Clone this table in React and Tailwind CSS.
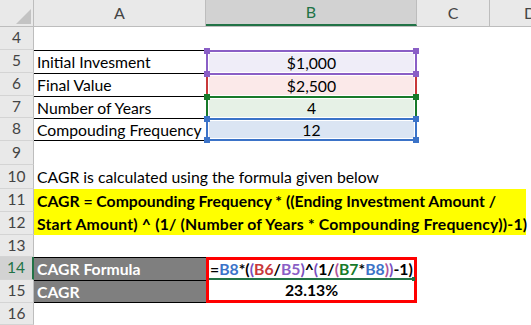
import React from "react";

const F = { fontFamily: "Lato, 'Liberation Sans', sans-serif" };

function RH({ n, sel }) {
  return (
    <div
      className={
        "w-[34px] shrink-0 h-full flex items-center justify-center text-[15.5px] border-b border-[#d4d4d4] " +
        (sel
          ? "bg-[#d2d2d2] text-[#217346] border-r-2 border-r-[#217346]"
          : "bg-[#e9e9e9] text-[#444] border-r border-r-[#bdbdbd]")
      }
    >
      {n}
    </div>
  );
}

function Row({ h, children }) {
  return <div className={"flex " + h}>{children}</div>;
}

function Handle({ pos, color }) {
  return <div className={"absolute w-[6px] h-[6px] z-10 " + pos + " " + color} />;
}

export default function App() {
  const P = "text-[#7a4fc0]";
  return (
    <div className="w-[531px] h-[325px] overflow-hidden bg-white text-black" style={F}>
      {/* header */}
      <div className="flex h-[27px] border-b border-[#bdbdbd] text-[16px] text-[#444]">
        <div className="w-[34px] shrink-0 bg-[#e9e9e9] border-r border-[#bdbdbd] relative">
          <svg className="absolute left-0 top-0" width="34" height="26" viewBox="0 0 34 26">
            <polygon points="16,24 31,9 31,24" fill="#c3c3c3" />
          </svg>
        </div>
        <div className="w-[172px] shrink-0 bg-[#e9e9e9] border-r border-[#bdbdbd] flex items-center justify-center">A</div>
        <div className="w-[211px] shrink-0 bg-[#d2d2d2] border-r border-[#bdbdbd] border-b-2 border-b-[#217346] text-[#217346] flex items-center justify-center">B</div>
        <div className="w-[73px] shrink-0 bg-[#e9e9e9] border-r border-[#bdbdbd] flex items-center justify-center">C</div>
        <div className="flex-1 bg-[#e9e9e9] flex items-center pl-[34px]">D</div>
      </div>

      <div className="text-[15.75px] leading-none">
        <Row h="h-[23px]">
          <RH n="4" />
        </Row>

        <Row h="h-[23px]">
          <RH n="5" />
          <div className="w-[172px] shrink-0 border-t border-black flex items-center pl-[3px]">Initial Invesment</div>
          <div className="w-[211px] shrink-0 relative border-t-2 border-x-2 border-[#8a5fc6] p-px">
            <Handle pos="-left-[4px] -top-[4px]" color="bg-[#8a5fc6]" />
            <Handle pos="-right-[4px] -top-[4px]" color="bg-[#8a5fc6]" />
            <div className="h-full bg-[#efedf8] flex items-center justify-center">$1,000</div>
          </div>
        </Row>

        <Row h="h-[23px]">
          <RH n="6" />
          <div className="w-[172px] shrink-0 border-t border-black flex items-center pl-[3px]">Final Value</div>
          <div className="w-[211px] shrink-0 relative border-t-2 border-t-[#8a5fc6] border-x-2 border-x-[#c8383a] p-px">
            <Handle pos="-left-[4px] -top-[4px]" color="bg-[#8a5fc6]" />
            <Handle pos="-right-[4px] -top-[4px]" color="bg-[#8a5fc6]" />
            <div className="h-full bg-[#fbe9e9] flex items-center justify-center">$2,500</div>
          </div>
        </Row>

        <Row h="h-[22px]">
          <RH n="7" />
          <div className="w-[172px] shrink-0 border-t border-black flex items-center pl-[3px]">Number of Years</div>
          <div className="w-[211px] shrink-0 relative border-t-2 border-x-2 border-[#177a2a] p-px">
            <Handle pos="-left-[4px] -top-[4px]" color="bg-[#177a2a]" />
            <Handle pos="-right-[4px] -top-[4px]" color="bg-[#177a2a]" />
            <div className="h-full bg-[#e6f1e6] flex items-center justify-center">4</div>
          </div>
        </Row>

        <Row h="h-[23px]">
          <RH n="8" />
          <div className="w-[172px] shrink-0 border-y border-black flex items-center pl-[3px] whitespace-nowrap">Compouding Frequency</div>
          <div className="w-[211px] shrink-0 relative border-2 border-[#3b73c8] p-px">
            <Handle pos="-left-[4px] -top-[4px]" color="bg-[#3b73c8]" />
            <Handle pos="-right-[4px] -top-[4px]" color="bg-[#3b73c8]" />
            <Handle pos="-left-[4px] -bottom-[4px]" color="bg-[#3b73c8]" />
            <Handle pos="-right-[4px] -bottom-[4px]" color="bg-[#3b73c8]" />
            <div className="h-full bg-[#dbe5f3] flex items-center justify-center">12</div>
          </div>
        </Row>

        <Row h="h-[24px]">
          <RH n="9" />
        </Row>

        <Row h="h-[24px]">
          <RH n="10" />
          <div className="flex items-center pl-[3px] whitespace-nowrap">CAGR is calculated using the formula given below</div>
        </Row>

        <Row h="h-[23px]">
          <RH n="11" />
          <div className="w-[492px] shrink-0 bg-[#ffff00] font-bold flex items-center pl-[3px] whitespace-nowrap">
            CAGR = Compounding Frequency * ((Ending Investment Amount /
          </div>
        </Row>

        <Row h="h-[23px]">
          <RH n="12" />
          <div className="w-[492px] shrink-0 bg-[#ffff00] font-bold flex items-center pl-[3px] whitespace-nowrap tracking-[0.2px]">
            Start Amount) ^ (1/ (Number of Years * Compounding Frequency))-1)
          </div>
        </Row>

        <Row h="h-[22px]">
          <RH n="13" />
        </Row>

        <Row h="h-[23px]">
          <RH n="14" sel />
          <div className="w-[172px] shrink-0 bg-[#7f7f7f] border-t border-black text-white font-bold flex items-center pl-[3px]">CAGR Formula</div>
          <div className="w-[211px] shrink-0 border-t-[3px] border-x-[3px] border-[#ff0000]">
            <div className="h-full relative border-b-2 border-[#217346] flex items-center pl-px font-bold whitespace-nowrap">
              <span>=</span>
              <span className="text-[#3b73c8]">B8</span>
              <span>*(</span>
              <span className={P}>(</span>
              <span className="text-[#c8383a]">B6</span>
              <span>/</span>
              <span className="text-[#8a5fc6]">B5</span>
              <span className={P}>)</span>
              <span>^</span>
              <span className={P}>(</span>
              <span>1/</span>
              <span className="text-[#b0559a]">(</span>
              <span className="text-[#177a2a]">B7</span>
              <span>*</span>
              <span className="text-[#3b73c8]">B8</span>
              <span className="text-[#b0559a]">)</span>
              <span className={P}>)</span>
              <span>-1)</span>
              <div className="absolute -right-px -bottom-[3px] w-[3px] h-[4px] bg-[#217346]" />
            </div>
          </div>
        </Row>

        <Row h="h-[23px]">
          <RH n="15" />
          <div className="w-[172px] shrink-0 bg-[#7f7f7f] border-y border-black text-white font-bold flex items-center pl-[3px]">CAGR</div>
          <div className="w-[211px] shrink-0 border-b-[3px] border-x-[3px] border-[#ff0000] flex items-center justify-center font-bold">
            23.13%
          </div>
        </Row>

        <Row h="h-[22px]">
          <RH n="16" />
        </Row>
      </div>
    </div>
  );
}
